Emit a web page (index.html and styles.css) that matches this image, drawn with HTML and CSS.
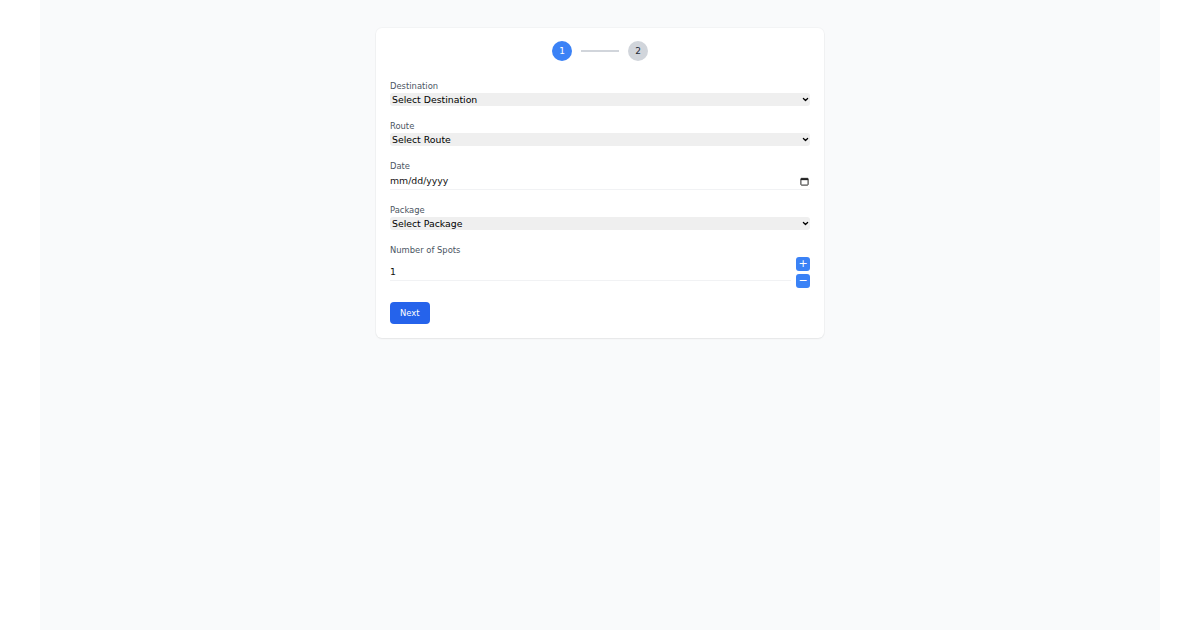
FILE: index.html
```html
<!DOCTYPE html>
<html lang="en">
<head>
<meta charset="utf-8">
<title>Booking</title>
<link rel="stylesheet" href="styles.css">
</head>
<body>
<div class="page">
  <div class="card">
    <div class="steps">
      <span class="step step-active">1</span>
      <span class="step-line"></span>
      <span class="step">2</span>
    </div>
    <div class="group">
      <label class="label">Destination</label>
      <div class="select-wrap">
        <select class="select"><option>Select Destination</option></select>
        <svg class="chev" viewBox="0 0 10 10" width="7" height="7"><path d="M2 3.5 L5 6.5 L8 3.5" fill="none" stroke="#000" stroke-width="1.8" stroke-linecap="round" stroke-linejoin="round"/></svg>
      </div>
    </div>
    <div class="group">
      <label class="label">Route</label>
      <div class="select-wrap">
        <select class="select"><option>Select Route</option></select>
        <svg class="chev" viewBox="0 0 10 10" width="7" height="7"><path d="M2 3.5 L5 6.5 L8 3.5" fill="none" stroke="#000" stroke-width="1.8" stroke-linecap="round" stroke-linejoin="round"/></svg>
      </div>
    </div>
    <div class="group">
      <label class="label">Date</label>
      <div class="input-wrap">
        <span class="input-text">mm/dd/yyyy</span>
        <svg class="cal" viewBox="0 0 10 10" width="9" height="9"><rect x="1" y="1.5" width="8" height="7.5" rx="0.6" fill="none" stroke="#222" stroke-width="1.1"/><rect x="1" y="1.5" width="8" height="2" fill="#222"/></svg>
      </div>
    </div>
    <div class="group">
      <label class="label">Package</label>
      <div class="select-wrap">
        <select class="select"><option>Select Package</option></select>
        <svg class="chev" viewBox="0 0 10 10" width="7" height="7"><path d="M2 3.5 L5 6.5 L8 3.5" fill="none" stroke="#000" stroke-width="1.8" stroke-linecap="round" stroke-linejoin="round"/></svg>
      </div>
    </div>
    <div class="group group-last">
      <label class="label">Number of Spots</label>
      <div class="spots-row">
        <div class="input-wrap spots-input">
          <span class="input-text">1</span>
        </div>
        <div class="stepper">
          <span class="step-btn">+</span>
          <span class="step-btn">&minus;</span>
        </div>
      </div>
    </div>
    <button class="next">Next</button>
  </div>
</div>
</body>
</html>
```
FILE: styles.css
```css
html, body {
  margin: 0;
  padding: 0;
  background: #ffffff;
  font-family: "DejaVu Sans", sans-serif;
}
.page {
  width: 1120px;
  margin: 0 auto;
  min-height: 630px;
  background: #f9fafb;
  padding-top: 28px;
  box-sizing: border-box;
}
.card {
  width: 448px;
  margin: 0 auto;
  background: #ffffff;
  border-radius: 6px;
  box-shadow: 0 1px 2px rgba(0,0,0,0.06), 0 0 0 1px rgba(0,0,0,0.025);
  padding: 13px 14px 14px;
  box-sizing: border-box;
}
.steps {
  display: flex;
  justify-content: center;
  align-items: center;
  gap: 9px;
  margin-bottom: 19px;
}
.step {
  width: 20px;
  height: 20px;
  border-radius: 50%;
  background: #d1d5db;
  color: #1f2937;
  font-size: 9px;
  display: flex;
  align-items: center;
  justify-content: center;
}
.step-active {
  background: #3b82f6;
  color: #ffffff;
}
.step-line {
  width: 38px;
  height: 2px;
  background: #d1d5db;
}
.group {
  margin-bottom: 14px;
}
.group-last {
  margin-bottom: 14px;
}
.label {
  display: block;
  font-size: 8.4px;
  line-height: 12px;
  color: #4b5563;
  margin-bottom: 1px;
}
.select-wrap {
  position: relative;
}
.select {
  display: block;
  width: 100%;
  height: 13px;
  appearance: none;
  -webkit-appearance: none;
  border: none;
  border-radius: 3px;
  background: #efefef;
  font-family: "DejaVu Sans", sans-serif;
  font-size: 9.33px;
  color: #000000;
  padding: 0 0 0 2px;
  margin: 0;
  line-height: 13px;
}
.chev {
  position: absolute;
  right: 1px;
  top: 3px;
  pointer-events: none;
}
.input-wrap {
  display: flex;
  align-items: center;
  justify-content: space-between;
  height: 16px;
  border-bottom: 1px solid #f1f2f4;
  font-size: 9.33px;
  color: #111111;
}
.input-text {
  line-height: 16px;
}
.cal {
  margin-right: 1px;
}
.spots-row {
  display: flex;
  align-items: center;
  gap: 5px;
  margin-top: 1px;
}
.spots-input {
  flex: 1;
}
.stepper {
  display: flex;
  flex-direction: column;
  gap: 3px;
}
.step-btn {
  width: 14px;
  height: 14px;
  border-radius: 3px;
  background: #3b82f6;
  color: #ffffff;
  font-size: 11px;
  line-height: 14px;
  text-align: center;
}
.next {
  display: block;
  height: 22px;
  padding: 0 10px;
  border: none;
  border-radius: 4px;
  background: #2563eb;
  color: #ffffff;
  font-family: "DejaVu Sans", sans-serif;
  font-size: 8.4px;
}
```
